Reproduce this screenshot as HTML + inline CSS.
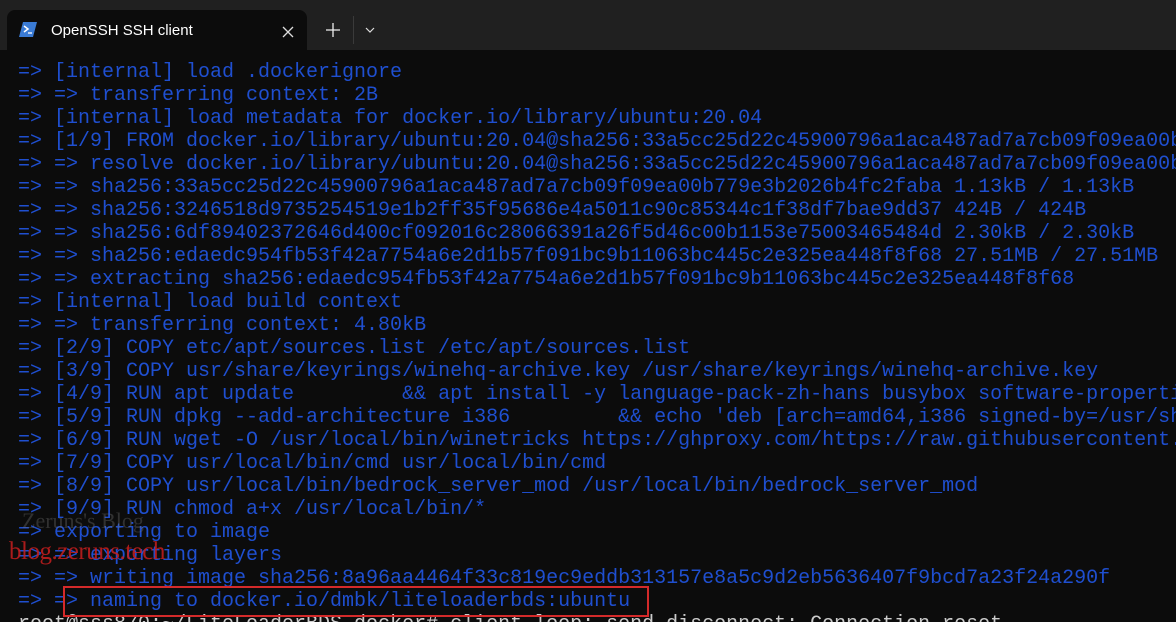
<!DOCTYPE html>
<html><head><meta charset="utf-8"><style>
html,body{margin:0;width:1176px;height:622px;overflow:hidden}
body{background:#0c0c0c;position:relative;font-family:"Liberation Sans",sans-serif}
#bar{position:absolute;left:0;top:0;width:1176px;height:50px;background:#202020}
#tab{position:absolute;left:7px;top:10px;width:300px;height:40px;background:#0c0c0c;border-radius:8px 8px 0 0}
#tab .t{position:absolute;left:44px;top:12px;color:#fff;font-size:15px}
#term{position:absolute;left:18px;top:61px;font-family:"Liberation Mono",monospace;font-size:20px;line-height:23px;color:#1f4fd0;white-space:pre}
</style></head><body>
<div id="bar">
<div id="tab">
<svg style="position:absolute;left:12px;top:12px" width="18" height="15"><polygon points="4,0 18,0 14,15 0,15" fill="#3a7bd5"/><path d="M5 4l4 3-4 3" stroke="#fff" stroke-width="1.5" fill="none"/><path d="M9 11h4" stroke="#fff" stroke-width="1.3"/></svg>
<span class="t">OpenSSH SSH client</span>
<svg style="position:absolute;left:275px;top:16px" width="12" height="12"><path d="M1 1L11 11M11 1L1 11" stroke="#ddd" stroke-width="1.3"/></svg>
</div>
<svg style="position:absolute;left:325px;top:22px" width="16" height="16"><path d="M8 1v14M1 8h14" stroke="#eee" stroke-width="1.3"/></svg>
<div style="position:absolute;left:353px;top:16px;width:1px;height:28px;background:#3a3a3a"></div>
<svg style="position:absolute;left:365px;top:27px" width="10" height="6"><path d="M1 1l4 4 4-4" stroke="#ddd" stroke-width="1.2" fill="none"/></svg>
</div>
<div id="term">=> [internal] load .dockerignore
=> => transferring context: 2B
=> [internal] load metadata for docker.io/library/ubuntu:20.04
=> [1/9] FROM docker.io/library/ubuntu:20.04@sha256:33a5cc25d22c45900796a1aca487ad7a7cb09f09ea00b
=> => resolve docker.io/library/ubuntu:20.04@sha256:33a5cc25d22c45900796a1aca487ad7a7cb09f09ea00b
=> => sha256:33a5cc25d22c45900796a1aca487ad7a7cb09f09ea00b779e3b2026b4fc2faba 1.13kB / 1.13kB
=> => sha256:3246518d9735254519e1b2ff35f95686e4a5011c90c85344c1f38df7bae9dd37 424B / 424B
=> => sha256:6df89402372646d400cf092016c28066391a26f5d46c00b1153e75003465484d 2.30kB / 2.30kB
=> => sha256:edaedc954fb53f42a7754a6e2d1b57f091bc9b11063bc445c2e325ea448f8f68 27.51MB / 27.51MB
=> => extracting sha256:edaedc954fb53f42a7754a6e2d1b57f091bc9b11063bc445c2e325ea448f8f68
=> [internal] load build context
=> => transferring context: 4.80kB
=> [2/9] COPY etc/apt/sources.list /etc/apt/sources.list
=> [3/9] COPY usr/share/keyrings/winehq-archive.key /usr/share/keyrings/winehq-archive.key
=> [4/9] RUN apt update         && apt install -y language-pack-zh-hans busybox software-propertie
=> [5/9] RUN dpkg --add-architecture i386         && echo 'deb [arch=amd64,i386 signed-by=/usr/sh
=> [6/9] RUN wget -O /usr/local/bin/winetricks https://ghproxy.com/https://raw.githubusercontent.
=> [7/9] COPY usr/local/bin/cmd usr/local/bin/cmd
=> [8/9] COPY usr/local/bin/bedrock_server_mod /usr/local/bin/bedrock_server_mod
=> [9/9] RUN chmod a+x /usr/local/bin/*
=> exporting to image
=> => exporting layers
=> => writing image sha256:8a96aa4464f33c819ec9eddb313157e8a5c9d2eb5636407f9bcd7a23f24a290f
=> => naming to docker.io/dmbk/liteloaderbds:ubuntu
<span style="color:#ccc">root@sss870:~/LiteLoaderBDS docker# client_loop: send disconnect: Connection reset</span></div>
<div style="position:absolute;left:22px;top:508px;font-family:'Liberation Serif',serif;font-size:22px;color:rgba(120,120,120,0.35)">Zeruns's Blog</div>
<div style="position:absolute;left:9px;top:538px;font-family:'Liberation Serif',serif;font-size:25px;letter-spacing:-0.5px;color:rgba(200,30,30,0.85)">blog.zeruns.tech</div>
<div style="position:absolute;left:63px;top:586px;width:582px;height:27px;border:2px solid #d42a2a"></div>
</body></html>
